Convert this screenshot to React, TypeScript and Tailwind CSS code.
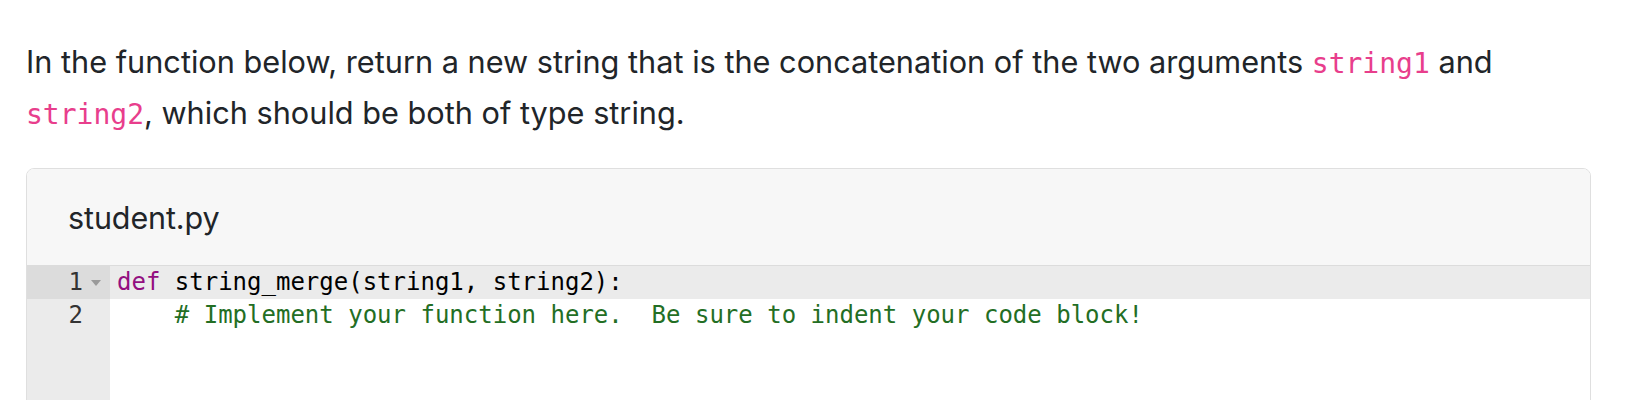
import React from 'react';

const mono = "font-['DejaVu_Sans_Mono',Menlo,monospace]";

function FoldArrow() {
  return (
    <svg width="10" height="6" viewBox="0 0 10 6" className="absolute right-[9px] top-[14px]">
      <path d="M0 0 L10 0 L5 6 Z" fill="#9a9a9a" />
    </svg>
  );
}

export default function App() {
  return (
    <div className="min-h-screen bg-white font-['Inter','Noto_Sans',sans-serif] text-[#212529]">
      <div className="pl-[26px] pt-[37px] w-[1591px]">
        <p className="text-[30.7px] leading-[49px]">
          In the function below, return a new string that is the concatenation of the two arguments{' '}
          <code className={`${mono} text-[28px] text-[#e83e8c]`}>string1</code> and{' '}
          <code className={`${mono} text-[28px] text-[#e83e8c]`}>string2</code>, which should be both of type string.
        </p>

        <div className="mt-[29px] border border-[#dfdfdf] rounded-[8px] overflow-hidden">
          <div className="h-[97px] bg-[#f7f7f7] border-b border-[#dcdcdc] flex items-center pl-[41px]">
            <span className="text-[30.5px] tracking-[-0.1px] pt-[2px]">student.py</span>
          </div>

          <div className={`flex ${mono} text-[24px] leading-[32px] h-[200px]`}>
            <div className="w-[83px] bg-[#ebebeb] text-[#333]">
              <div className="relative h-[33px] bg-[#dcdcdc] text-right pr-[27px]">
                1
                <FoldArrow />
              </div>
              <div className="h-[32px] text-right pr-[27px]">2</div>
            </div>
            <div className="flex-1">
              <div className="h-[33px] bg-[#ebebeb] pl-[7px] whitespace-pre text-black">
                <span className="text-[#930f80]">def</span> string_merge(string1, string2):
              </div>
              <div className="h-[32px] pl-[7px] whitespace-pre text-[#236e24]">
                {'    # Implement your function here.  Be sure to indent your code block!'}
              </div>
            </div>
          </div>
        </div>
      </div>
    </div>
  );
}
